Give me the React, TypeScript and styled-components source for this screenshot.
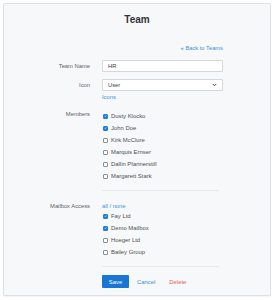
import React from "react";
import styled, {createGlobalStyle} from "styled-components";

const GlobalStyle = createGlobalStyle`
  html, body {
    margin: 0;
    padding: 0;
    background: #ffffff;
  }
  body {
    font-family: "Liberation Sans", Arial, sans-serif;
  }
`

const Card = styled.div`
  margin: 3px;
  height: 293px;
  box-sizing: border-box;
  background: #f7f8f9;
  border: 1px solid #dde1e6;
  border-radius: 2px;
  box-shadow: 0 1px 1px rgba(0, 0, 0, 0.05);
  display: flex;
  flex-direction: column;
`

const Title = styled.h1`
  margin: 10px 0 0 0;
  font-size: 10px;
  line-height: 12px;
  font-weight: bold;
  color: #2f3338;
  text-align: center;
`

const Form = styled.div`
  display: grid;
  grid-template-columns: 83px 121px;
  column-gap: 12px;
  padding-left: 3px;
  margin-top: 18px;
`

const BackLink = styled.a`
  grid-column: 2;
  justify-self: end;
  font-size: 5.75px;
  line-height: 8px;
  color: #3b8fe0;
  text-decoration: none;
  margin-bottom: 8px;
`

const Label = styled.div<{$top?: number}>`
  grid-column: 1;
  text-align: right;
  font-size: 5.8px;
  color: #5c6166;
  line-height: 8px;
  padding-top: ${p => p.$top ?? 0}px;
`

const Field = styled.div<{$gap?: number}>`
  grid-column: 2;
  display: flex;
  flex-direction: column;
  margin-bottom: ${p => p.$gap ?? 0}px;
`

const Input = styled.div`
  height: 12px;
  box-sizing: border-box;
  background: #fff;
  border: 1px solid #d3d8dd;
  border-radius: 1px;
  padding: 0 5px;
  font-size: 5.8px;
  line-height: 10px;
  color: #3a3f44;
  display: flex;
  align-items: center;
  justify-content: space-between;
`

const Chevron = styled.svg`
  width: 5px;
  height: 4px;
`

const SmallLink = styled.a<{$top?: number}>`
  font-size: 5.8px;
  line-height: 8px;
  color: #3b8fe0;
  text-decoration: none;
  margin-top: ${p => p.$top ?? 2}px;
`

const CheckList = styled.div`
  display: flex;
  flex-direction: column;
`

const CheckRow = styled.div`
  height: 12px;
  display: flex;
  align-items: center;
  gap: 3px;
  font-size: 5.9px;
  color: #4b5056;
`

const Box = styled.span<{$on: boolean}>`
  width: 5px;
  height: 5px;
  box-sizing: border-box;
  margin-left: 1px;
  border-radius: 1px;
  border: 0.6px solid ${p => p.$on ? "#1f7fe0" : "#8a8f95"};
  background: ${p => p.$on ? "#1f7fe0" : "#fff"};
  display: flex;
  align-items: center;
  justify-content: center;
`

const Divider = styled.div`
  grid-column: 2;
  width: 117px;
  height: 1px;
  background: #e6e9ec;
`

const Buttons = styled.div`
  grid-column: 2;
  display: flex;
  align-items: center;
  margin-top: 8px;
`

const SaveButton = styled.button`
  width: 27px;
  height: 13px;
  border: none;
  border-radius: 1px;
  background: #1976d2;
  color: #fff;
  font-family: inherit;
  font-size: 5.9px;
  padding: 0;
`

const TextButton = styled.a<{$danger?: boolean}>`
  font-size: 5.9px;
  color: ${p => p.$danger ? "#e0605a" : "#3b8fe0"};
  text-decoration: none;
  margin-left: ${p => p.$danger ? 14 : 8}px;
`

const members = [
  {name: "Dusty Klocko", on: true},
  {name: "John Doe", on: true},
  {name: "Kirk McClure", on: false},
  {name: "Marquis Ernser", on: false},
  {name: "Dallin Pfannerstill", on: false},
  {name: "Margarett Stark", on: false},
]

const mailboxes = [
  {name: "Fay Ltd", on: true},
  {name: "Demo Mailbox", on: true},
  {name: "Hoeger Ltd", on: false},
  {name: "Bailey Group", on: false},
]

const Check = ({on}: {on: boolean}) => (
  <Box $on={on}>
    {on ? (
      <svg width="4" height="4" viewBox="0 0 10 10">
        <path d="M2 5.2 L4.2 7.4 L8.2 2.8" stroke="#fff" strokeWidth="1.8" fill="none"/>
      </svg>
    ) : null}
  </Box>
)

const App = () => {
  return (
    <>
      <GlobalStyle/>
      <Card>
        <Title>Team</Title>
        <Form>
          <BackLink href="#">« Back to Teams</BackLink>

          <Label $top={2}>Team Name</Label>
          <Field $gap={7}>
            <Input>HR</Input>
          </Field>

          <Label $top={2}>Icon</Label>
          <Field $gap={9}>
            <Input>
              User
              <Chevron viewBox="0 0 10 8">
                <path d="M1.5 2 L5 5.5 L8.5 2" stroke="#333" strokeWidth="1.8" fill="none"/>
              </Chevron>
            </Input>
            <SmallLink href="#">Icons</SmallLink>
          </Field>

          <Label>Members</Label>
          <Field $gap={8}>
            <CheckList>
              {members.map(m => (
                <CheckRow key={m.name}>
                  <Check on={m.on}/>
                  {m.name}
                </CheckRow>
              ))}
            </CheckList>
          </Field>
          <Divider/>

          <Label $top={11}>Mailbox Access</Label>
          <Field $gap={8}>
            <SmallLink href="#" $top={11}>all / none</SmallLink>
            <CheckList>
              {mailboxes.map(m => (
                <CheckRow key={m.name}>
                  <Check on={m.on}/>
                  {m.name}
                </CheckRow>
              ))}
            </CheckList>
          </Field>
          <Divider/>

          <Buttons>
            <SaveButton>Save</SaveButton>
            <TextButton href="#">Cancel</TextButton>
            <TextButton href="#" $danger>Delete</TextButton>
          </Buttons>
        </Form>
      </Card>
    </>
  );
};

export default App;
